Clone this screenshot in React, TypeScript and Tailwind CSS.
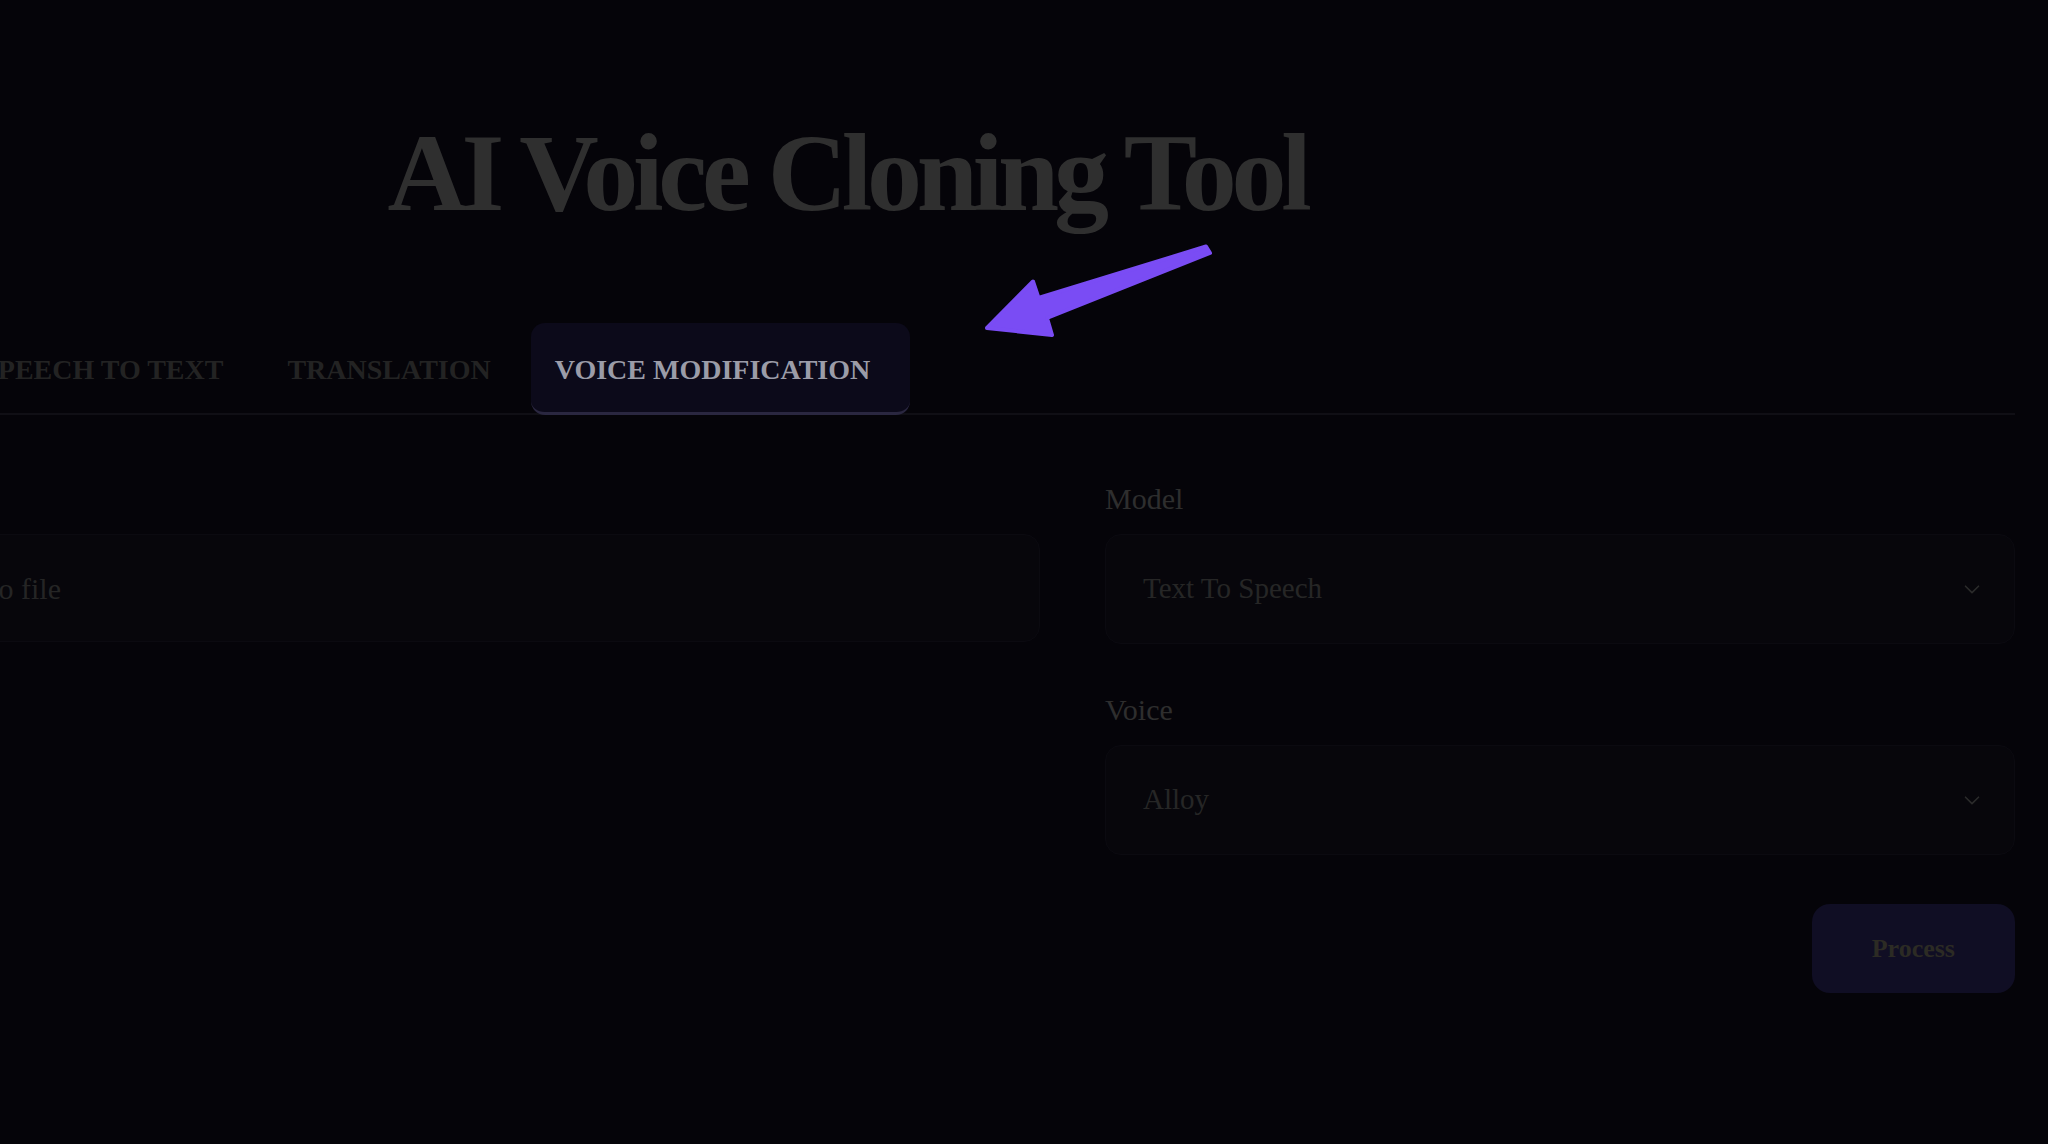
import type { ReactNode } from 'react';

const tabs = ['TEXT TO SPEECH', 'SPEECH TO TEXT', 'TRANSLATION', 'VOICE MODIFICATION'];
const activeTab = 'VOICE MODIFICATION';

function Chevron() {
  return (
    <svg width="16" height="9" viewBox="0 0 16 9" fill="none" className="shrink-0">
      <path d="M1.5 1.2 8 7.6l6.5-6.4" stroke="#2b2b2b" strokeWidth="1.6" strokeLinecap="round" strokeLinejoin="round" />
    </svg>
  );
}

function Field({ label, children }: { label: string; children: ReactNode }) {
  return (
    <div>
      <div className="mb-[17px] text-[30px] leading-[36px] text-[#2e2e2e]">{label}</div>
      {children}
    </div>
  );
}

function SelectBox({ value }: { value: string }) {
  return (
    <div className="flex h-[110px] items-center justify-between rounded-[16px] border border-[#0b0a10] bg-[#07060b] pl-[37px] pr-[34px] text-[29px] text-[#262626]">
      <span>{value}</span>
      <Chevron />
    </div>
  );
}

function Arrow() {
  return (
    <svg
      width="240"
      height="110"
      viewBox="0 0 240 110"
      className="pointer-events-none absolute left-[980px] top-[240px]"
    >
      <path
        d="M226 6.5 L230 13 L67 78 L72 95 L7 88 L53 41.5 L58.5 58 Z"
        fill="#7a4cf4"
        stroke="#7a4cf4"
        strokeWidth="4"
        strokeLinejoin="round"
      />
    </svg>
  );
}

export default function App() {
  return (
    <div className="relative min-h-screen w-full overflow-hidden bg-[#050409] font-['Liberation_Serif',serif]">
      <div className="ml-[-321px] w-[2336px] pt-[118px] pb-[150px]">
        <h1 className="text-center text-[110px] font-bold leading-[110px] tracking-[-0.048em] text-[#2f2f2f]">
          AI Voice Cloning Tool
        </h1>

        <div className="ml-[-26px] mt-[95px] flex border-b-2 border-[#100f15]">
          {tabs.map((t) => {
            const isActive = t === activeTab;
            return (
              <button
                key={t}
                type="button"
                className={
                  isActive
                    ? 'mb-[-2px] flex h-[92px] items-center rounded-[14px] border-b-[3px] border-[#2a2740] bg-[#0c0a1a] pl-6 pr-10 pt-[5px] text-[28px] font-bold leading-none text-[#9b9ca8]'
                    : 'mb-[-2px] flex h-[92px] items-center pl-6 pr-10 pt-[2px] text-[28px] font-bold leading-none text-[#232323]'
                }
              >
                {t}
              </button>
            );
          })}
        </div>

        <div className="mt-[66px] grid grid-cols-[1228px_910px] justify-end gap-x-[65px]">
          <Field label="Audio File">
            <div className="flex h-[108px] items-center rounded-[16px] border border-[#0b0a10] bg-[#07060b] pl-[38px] text-[30px] text-[#252525]">
              Upload audio file
            </div>
          </Field>

          <div>
            <Field label="Model">
              <SelectBox value="Text To Speech" />
            </Field>
            <div className="mt-[48px]">
              <Field label="Voice">
                <SelectBox value="Alloy" />
              </Field>
            </div>
            <div className="mt-[49px] flex justify-end">
              <button
                type="button"
                className="h-[89px] rounded-[18px] bg-[#100e24] px-[60px] text-[26px] font-bold text-[#2c2b24]"
              >
                Process
              </button>
            </div>
          </div>
        </div>
      </div>

      <Arrow />
    </div>
  );
}
